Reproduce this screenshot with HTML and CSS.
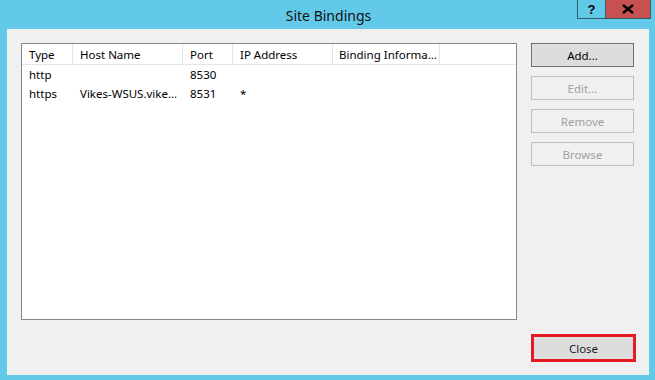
FILE: index.html
```html
<!DOCTYPE html>
<html lang="en">
<head>
  <meta charset="UTF-8">
  <title>Site Bindings</title>
  <link rel="stylesheet" href="styles.css">
</head>
<body>
  <div class="window">
    <div class="titlebar">
      <span class="title">Site Bindings</span>
      <div class="controls">
        <span class="ctl help">?</span>
        <span class="ctl close-x">
          <svg width="12" height="10" viewBox="0 0 12 10"><path d="M1 1 L11 9 M11 1 L1 9" stroke="#000" stroke-width="2.4"/></svg>
        </span>
      </div>
    </div>

    <div class="content">
      <div class="main">
        <div class="list">
          <div class="header">
            <div class="col c-type">Type</div>
            <div class="col c-host">Host Name</div>
            <div class="col c-port">Port</div>
            <div class="col c-ip">IP Address</div>
            <div class="col c-info">Binding Informa...</div>
          </div>
          <div class="row">
            <div class="cell c-type">http</div>
            <div class="cell c-host"></div>
            <div class="cell c-port">8530</div>
            <div class="cell c-ip"></div>
            <div class="cell c-info"></div>
          </div>
          <div class="row">
            <div class="cell c-type">https</div>
            <div class="cell c-host">Vikes-WSUS.vike...</div>
            <div class="cell c-port">8531</div>
            <div class="cell c-ip">*</div>
            <div class="cell c-info"></div>
          </div>
        </div>

        <div class="buttons">
          <button class="btn default">Add...</button>
          <button class="btn" disabled>Edit...</button>
          <button class="btn" disabled>Remove</button>
          <button class="btn" disabled>Browse</button>
        </div>
      </div>

      <div class="footer">
        <button class="btn close">Close</button>
      </div>
    </div>
  </div>
</body>
</html>
```

FILE: styles.css
```css
body {
  margin: 0;
  background: #63c9e9;
  font-family: "Noto Sans", "Open Sans", sans-serif;
  font-size: 11.5px;
  color: #000;
}

.window {
  width: 655px;
  height: 380px;
  display: flex;
  flex-direction: column;
}

.titlebar {
  position: relative;
  height: 29px;
  display: flex;
  justify-content: center;
  align-items: center;
}

.title {
  font-size: 14px;
  color: #111;
  margin-left: 2px;
  margin-top: 2px;
}

.controls {
  position: absolute;
  top: 0;
  left: 577px;
  display: flex;
}

.ctl {
  height: 19px;
  box-sizing: border-box;
  border: 1px solid #2f5d6c;
  border-top: none;
  display: flex;
  align-items: center;
  justify-content: center;
}

.help {
  width: 28px;
  font-family: "Liberation Sans", sans-serif;
  font-weight: bold;
  font-size: 13px;
  border-right: none;
}

.close-x {
  width: 46px;
  background: #c75050;
}

.content {
  flex: 1;
  margin: 0 6px 5px 7px;
  background: #f0f0f0;
  padding: 14px 13px 13px 14px;
  display: flex;
  flex-direction: column;
}

.main {
  display: flex;
  gap: 14px;
}

.list {
  width: 496px;
  height: 277px;
  box-sizing: border-box;
  background: #fff;
  border: 1px solid #828790;
}

.header {
  display: flex;
  height: 20px;
  border-bottom: 1px solid #e5e5e5;
}

.col {
  box-sizing: border-box;
  padding: 2px 0 0 7px;
  line-height: 18px;
  border-right: 1px solid #e5e5e5;
  white-space: nowrap;
}

.row {
  display: flex;
  height: 19px;
  line-height: 19px;
}

.cell {
  box-sizing: border-box;
  padding-left: 7px;
  white-space: nowrap;
  overflow: hidden;
}

.c-type { width: 51px; }
.c-host { width: 110px; }
.c-port { width: 50px; }
.c-ip { width: 100px; }
.c-info { width: 107px; padding-left: 6px; }

.buttons {
  display: flex;
  flex-direction: column;
  gap: 9px;
}

.btn {
  width: 103px;
  height: 24px;
  box-sizing: border-box;
  font-family: "Noto Sans", "Open Sans", sans-serif;
  font-size: 11.5px;
  background: #f0f0f0;
  border: 1px solid #adadad;
  color: #000;
  padding: 0;
}

.btn:disabled {
  color: #a0a0a0;
  border-color: #bfbfbf;
}

.default {
  background: #dddddd;
  border-color: #707070;
}

.footer {
  margin-top: auto;
  display: flex;
  justify-content: flex-end;
}

.close {
  width: 105px;
  height: 28px;
  background: #dddddd;
  border: 3px solid #e41b23;
  color: #1a1a2a;
}
```
